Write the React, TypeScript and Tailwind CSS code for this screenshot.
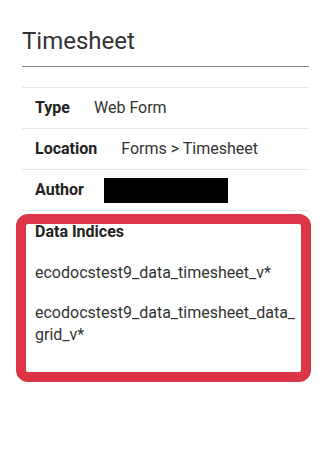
export default function App() {
  const rows = [
    { label: "Type", value: "Web Form" },
    { label: "Location", value: "Forms > Timesheet" },
  ];

  return (
    <div className="min-h-[453px] bg-white font-['Roboto',sans-serif] text-[#333]">
      <div className="px-[22px] pt-[26px]">
        {/* Title */}
        <h1 className="text-[24px] leading-[30px] font-normal text-[#333] pb-[10px] border-b border-[#8a8a8a]">
          Timesheet
        </h1>

        {/* Details table */}
        <div className="mt-[20px] border-t border-[#e6e6e6]">
          {rows.map((r) => (
            <div
              key={r.label}
              className="flex items-center gap-6 h-[41px] pl-[13px] border-b border-[#e6e6e6] text-[16px]"
            >
              <span className="font-bold text-[#222]">{r.label}</span>
              <span>{r.value}</span>
            </div>
          ))}
          <div className="flex items-center gap-5 h-[41px] pl-[13px] border-b border-[#e6e6e6] text-[16px]">
            <span className="font-bold text-[#222]">Author</span>
            <span className="w-[124px] h-[25px] bg-black" />
          </div>
        </div>
      </div>

      {/* Highlighted data indices */}
      <div className="ml-[16px] mr-[20px] mt-[3px] border-[10px] border-[#dc3545] rounded-[12px] pl-[9px] pb-[26px] text-[16px]">
        <div className="font-bold text-[#222] leading-[16px]">Data Indices</div>
        <div className="mt-[22px] leading-[22px] break-all">ecodocstest9_data_timesheet_v*</div>
        <div className="mt-[18px] leading-[22px] break-all">ecodocstest9_data_timesheet_data_grid_v*</div>
      </div>
    </div>
  );
}
